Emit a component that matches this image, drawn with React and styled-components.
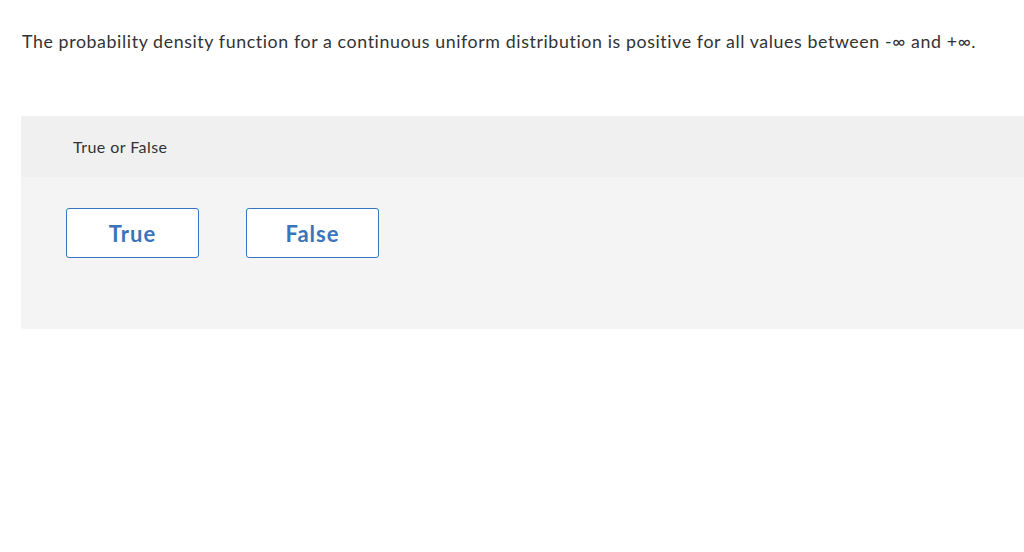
import React from "react";
import styled, { createGlobalStyle } from "styled-components";

const Global = createGlobalStyle`
  html, body { margin: 0; padding: 0; background: #fff; overflow: hidden; }
  body { font-family: Lato, "Open Sans", "Liberation Sans", sans-serif; color: #333; }
`;

const Page = styled.div`
  width: 1024px;
  height: 552px;
  padding: 29px 0 0 21px;
  box-sizing: border-box;
`;

const Question = styled.p`
  margin: 0 0 0 1px;
  font-size: 17.8px;
  line-height: 24px;
  color: #333;
  letter-spacing: 0.6px;
  white-space: nowrap;
`;

const Panel = styled.section`
  margin-top: 63px;
  width: 1040px;
  border-radius: 3px;
  overflow: hidden;
  background: #f4f4f4;
`;

const PanelHeader = styled.div`
  height: 61px;
  background: #f0f0f0;
  display: flex;
  align-items: center;
  padding-left: 52px;
  padding-bottom: 1px;
  box-sizing: border-box;
  font-size: 16px;
  letter-spacing: 0.45px;
  color: #333;
`;

const Choices = styled.div`
  display: flex;
  gap: 47px;
  padding: 31px 0 71px 45px;
`;

const Choice = styled.button`
  width: 133px;
  height: 50px;
  box-sizing: border-box;
  background: #fff;
  border: 1px solid #3675c0;
  border-radius: 3px;
  color: #3a74bb;
  font-family: Lato, "Open Sans", "Liberation Sans", sans-serif;
  font-weight: 700;
  font-size: 22px;
  letter-spacing: 1px;
  cursor: pointer;
  padding: 0;
`;

export default function App() {
  return (
    <>
      <Global />
      <Page>
        <Question>
          The probability density function for a continuous uniform distribution is positive for all values between -∞ and +∞.
        </Question>
        <Panel>
          <PanelHeader>True or False</PanelHeader>
          <Choices>
            <Choice>True</Choice>
            <Choice>False</Choice>
          </Choices>
        </Panel>
      </Page>
    </>
  );
}
